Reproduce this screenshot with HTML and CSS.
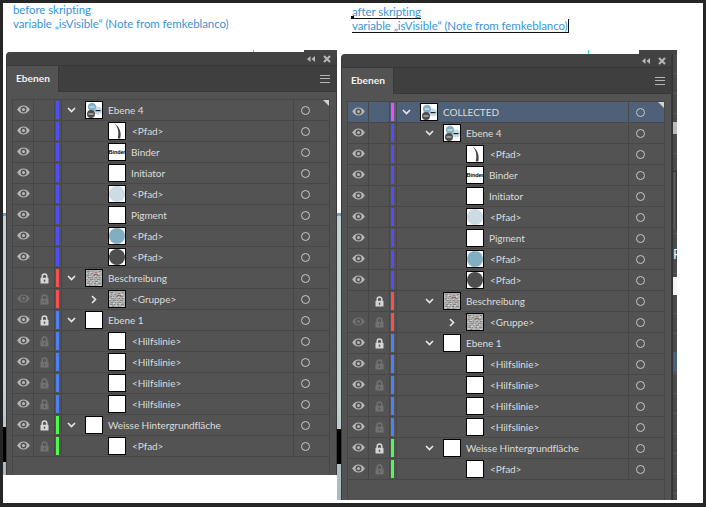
FILE: index.html
```html
<!DOCTYPE html>
<html lang="de">
<head>
<meta charset="utf-8">
<title>Ebenen before and after</title>
<link rel="stylesheet" href="styles.css">
</head>
<body>
<svg class="defs" width="0" height="0" aria-hidden="true">
  <symbol id="eye" viewBox="0 0 13 9"><path fill="currentColor" d="M.2 4.5C1.8 1.9 3.9.4 6.5.4s4.7 1.5 6.3 4.1C11.2 7.1 9.1 8.6 6.500 8.600S1.800 7.100.2 4.500z"/><circle cx="6.500" cy="4.500" r="3" fill="#535353"/><circle cx="6.500" cy="4.500" r="1.500" fill="currentColor"/></symbol>
  <symbol id="lock" viewBox="0 0 9 11"><path fill="none" stroke="currentColor" stroke-width="1.500" d="M2.200 5V3.200a2.300 2.300 0 0 1 4.600 0V5"/><rect x=".5" y="4.800" width="8" height="5.700" rx=".6" fill="currentColor"/><rect x="3.800" y="6.600" width="1.400" height="2.200" fill="#535353"/></symbol>
  <symbol id="down" viewBox="0 0 9 6"><path fill="none" stroke="currentColor" stroke-width="1.600" d="M1 1l3.500 3.500L8 1"/></symbol>
  <symbol id="right" viewBox="0 0 6 9"><path fill="none" stroke="currentColor" stroke-width="1.600" d="M1 1l3.500 3.500L1 8"/></symbol>
  <symbol id="art" viewBox="0 0 16 16"><circle cx="12" cy="8.500" r="4" fill="#c9dbe6"/><circle cx="6" cy="5" r="4.200" fill="#85b0c4"/><rect x="3.500" y="4.500" width="5" height="1" fill="#e8f0f4"/><circle cx="5" cy="12" r="4" fill="#4e4e4e"/><rect x="2.500" y="11.500" width="5" height="1" fill="#ddd"/><rect x="9.500" y="8" width="5" height="1.200" fill="#222"/></symbol>
  <symbol id="arc" viewBox="0 0 16 16"><path fill="#444" d="M5.500.5C9.300 4 10 9.500 8.800 15.500h2.400C12.800 9.500 10.500 3.500 5.500.5z"/></symbol>
  <symbol id="noise" viewBox="0 0 16 16"><rect width="16" height="16" fill="#b0b0b0"/><path fill="#868686" d="M1 1h3v1H1zM6 1h1v1H6zM9 2h2v1H9zM13 1h2v1h-2zM2 3h1v1H2zM5 3h2v1H5zM1 5h2v1H1zM4 5h1v1H4zM7 5h2v1H7zM11 5h3v1h-3zM2 7h3v1H2zM6 7h1v1H6zM9 7h2v1H9zM13 7h2v1h-2zM1 9h1v1H1zM4 9h3v1H4zM8 9h1v1H8zM11 9h3v1h-3zM2 11h2v1H2zM6 11h1v1H6zM9 11h3v1H9zM1 13h3v1H1zM5 13h1v1H5zM8 13h2v1H8zM12 13h3v1h-3zM3 15h2v1H3zM9 15h1v1H9z"/><path fill="#a8584c" d="M8 4h4v1H8z"/><path fill="#cfcfcf" d="M0 3h1v1H0zM4 2h2v1H4zM12 3h2v1h-2zM3 6h2v1H3zM9 6h1v1H9zM14 6h2v1h-2zM0 8h2v1H0zM6 10h2v1H6zM12 10h1v1h-1zM4 12h2v1H4zM10 12h2v1h-2zM1 14h2v1H1zM7 14h1v1H7zM13 15h2v1h-2z"/></symbol>
</svg>
<div class="screen">
  <main class="page">
    <i class="strip strip-left"></i>
    <i class="strip strip-mid"></i>
    <i class="scrap scrap-a"></i>
    <i class="scrap scrap-b"></i>
    <i class="tick tick-a"></i>
    <i class="tick tick-b"></i>
    <div class="edge">
      <i class="edge-light"></i>
      <i class="edge-box"></i>
      <span class="edge-f">F</span>
      <i class="edge-white"></i>
      <i class="edge-blue"></i>
    </div>

    <section class="col col-before">
      <p class="caption">before skripting<br>variable „isVisible“ (Note from femkeblanco)</p>
      <div class="panel">
        <div class="head"><svg class="collapse" viewBox="0 0 8 6"><path d="M3.500 0v6L0 3zM8 0v6L4.500 3z"/></svg><svg class="close" viewBox="0 0 8 8"><path d="M1 1l6 6M7 1L1 7"/></svg></div>
        <div class="tabs"><span class="tab">Ebenen</span><span class="menu"><i></i><i></i><i></i></span></div>
        <div class="list">
          <i class="corner"></i>
          <div class="row"><span class="c-eye"><svg class="eye"><use href="#eye"/></svg></span><span class="c-lock"></span><span class="c-tag"><i class="bar blue"></i></span><span class="name d0"><span class="chev"><svg class="down"><use href="#down"/></svg></span><span class="thumb"><svg><use href="#art"/></svg></span><span class="label">Ebene 4</span></span><span class="target"><i></i></span></div>
          <div class="row"><span class="c-eye"><svg class="eye"><use href="#eye"/></svg></span><span class="c-lock"></span><span class="c-tag"><i class="bar blue"></i></span><span class="name d1"><span class="chev"></span><span class="thumb"><svg><use href="#arc"/></svg></span><span class="label angled">&lt;Pfad&gt;</span></span><span class="target"><i></i></span></div>
          <div class="row"><span class="c-eye"><svg class="eye"><use href="#eye"/></svg></span><span class="c-lock"></span><span class="c-tag"><i class="bar blue"></i></span><span class="name d1"><span class="chev"></span><span class="thumb thumb-text">Binder</span><span class="label">Binder</span></span><span class="target"><i></i></span></div>
          <div class="row"><span class="c-eye"><svg class="eye"><use href="#eye"/></svg></span><span class="c-lock"></span><span class="c-tag"><i class="bar blue"></i></span><span class="name d1"><span class="chev"></span><span class="thumb"></span><span class="label">Initiator</span></span><span class="target"><i></i></span></div>
          <div class="row"><span class="c-eye"><svg class="eye"><use href="#eye"/></svg></span><span class="c-lock"></span><span class="c-tag"><i class="bar blue"></i></span><span class="name d1"><span class="chev"></span><span class="thumb"><i class="disc pale"></i></span><span class="label angled">&lt;Pfad&gt;</span></span><span class="target"><i></i></span></div>
          <div class="row"><span class="c-eye"><svg class="eye"><use href="#eye"/></svg></span><span class="c-lock"></span><span class="c-tag"><i class="bar blue"></i></span><span class="name d1"><span class="chev"></span><span class="thumb"></span><span class="label">Pigment</span></span><span class="target"><i></i></span></div>
          <div class="row"><span class="c-eye"><svg class="eye"><use href="#eye"/></svg></span><span class="c-lock"></span><span class="c-tag"><i class="bar blue"></i></span><span class="name d1"><span class="chev"></span><span class="thumb"><i class="disc teal"></i></span><span class="label angled">&lt;Pfad&gt;</span></span><span class="target"><i></i></span></div>
          <div class="row"><span class="c-eye"><svg class="eye"><use href="#eye"/></svg></span><span class="c-lock"></span><span class="c-tag"><i class="bar blue"></i></span><span class="name d1"><span class="chev"></span><span class="thumb"><i class="disc dark"></i></span><span class="label angled">&lt;Pfad&gt;</span></span><span class="target"><i></i></span></div>
          <div class="row"><span class="c-eye"></span><span class="c-lock"><svg class="lock"><use href="#lock"/></svg></span><span class="c-tag"><i class="bar red"></i></span><span class="name d0"><span class="chev"><svg class="down"><use href="#down"/></svg></span><span class="thumb"><svg><use href="#noise"/></svg></span><span class="label">Beschreibung</span></span><span class="target"><i></i></span></div>
          <div class="row"><span class="c-eye"><svg class="eye dim"><use href="#eye"/></svg></span><span class="c-lock"><svg class="lock dim"><use href="#lock"/></svg></span><span class="c-tag"><i class="bar red"></i></span><span class="name d1"><span class="chev"><svg class="side"><use href="#right"/></svg></span><span class="thumb"><svg><use href="#noise"/></svg></span><span class="label angled">&lt;Gruppe&gt;</span></span><span class="target"><i></i></span></div>
          <div class="row"><span class="c-eye"><svg class="eye"><use href="#eye"/></svg></span><span class="c-lock"><svg class="lock"><use href="#lock"/></svg></span><span class="c-tag"><i class="bar sky"></i></span><span class="name d0"><span class="chev"><svg class="down"><use href="#down"/></svg></span><span class="thumb"></span><span class="label">Ebene 1</span></span><span class="target"><i></i></span></div>
          <div class="row"><span class="c-eye"><svg class="eye"><use href="#eye"/></svg></span><span class="c-lock"><svg class="lock dim"><use href="#lock"/></svg></span><span class="c-tag"><i class="bar sky"></i></span><span class="name d1"><span class="chev"></span><span class="thumb"></span><span class="label angled">&lt;Hilfslinie&gt;</span></span><span class="target"><i></i></span></div>
          <div class="row"><span class="c-eye"><svg class="eye"><use href="#eye"/></svg></span><span class="c-lock"><svg class="lock dim"><use href="#lock"/></svg></span><span class="c-tag"><i class="bar sky"></i></span><span class="name d1"><span class="chev"></span><span class="thumb"></span><span class="label angled">&lt;Hilfslinie&gt;</span></span><span class="target"><i></i></span></div>
          <div class="row"><span class="c-eye"><svg class="eye"><use href="#eye"/></svg></span><span class="c-lock"><svg class="lock dim"><use href="#lock"/></svg></span><span class="c-tag"><i class="bar sky"></i></span><span class="name d1"><span class="chev"></span><span class="thumb"></span><span class="label angled">&lt;Hilfslinie&gt;</span></span><span class="target"><i></i></span></div>
          <div class="row"><span class="c-eye"><svg class="eye"><use href="#eye"/></svg></span><span class="c-lock"><svg class="lock dim"><use href="#lock"/></svg></span><span class="c-tag"><i class="bar sky"></i></span><span class="name d1"><span class="chev"></span><span class="thumb"></span><span class="label angled">&lt;Hilfslinie&gt;</span></span><span class="target"><i></i></span></div>
          <div class="row"><span class="c-eye"><svg class="eye"><use href="#eye"/></svg></span><span class="c-lock"><svg class="lock"><use href="#lock"/></svg></span><span class="c-tag"><i class="bar green"></i></span><span class="name d0"><span class="chev"><svg class="down"><use href="#down"/></svg></span><span class="thumb"></span><span class="label">Weisse Hintergrundfläche</span></span><span class="target"><i></i></span></div>
          <div class="row"><span class="c-eye"><svg class="eye"><use href="#eye"/></svg></span><span class="c-lock"><svg class="lock dim"><use href="#lock"/></svg></span><span class="c-tag"><i class="bar green"></i></span><span class="name d1"><span class="chev"></span><span class="thumb"></span><span class="label angled">&lt;Pfad&gt;</span></span><span class="target"><i></i></span></div>
        </div>
      </div>
    </section>

    <section class="col col-after">
      <p class="caption"><i class="handle"></i><span class="sel">after skripting</span><br><span class="sel caret">variable „isVisible“ (Note from femkeblanco)</span></p>
      <div class="panel">
        <div class="head"><svg class="collapse" viewBox="0 0 8 6"><path d="M3.500 0v6L0 3zM8 0v6L4.500 3z"/></svg><svg class="close" viewBox="0 0 8 8"><path d="M1 1l6 6M7 1L1 7"/></svg></div>
        <div class="tabs"><span class="tab">Ebenen</span><span class="menu"><i></i><i></i><i></i></span></div>
        <div class="list">
          <i class="corner"></i>
          <div class="row selected"><span class="c-eye"><svg class="eye"><use href="#eye"/></svg></span><span class="c-lock"></span><span class="c-tag"><i class="bar pink"></i></span><span class="name d0"><span class="chev"><svg class="down"><use href="#down"/></svg></span><span class="thumb"><svg><use href="#art"/></svg></span><span class="label">COLLECTED</span></span><span class="target"><i></i></span></div>
          <div class="row"><span class="c-eye"><svg class="eye"><use href="#eye"/></svg></span><span class="c-lock"></span><span class="c-tag"><i class="bar blue"></i></span><span class="name d1"><span class="chev"><svg class="down"><use href="#down"/></svg></span><span class="thumb"><svg><use href="#art"/></svg></span><span class="label">Ebene 4</span></span><span class="target"><i></i></span></div>
          <div class="row"><span class="c-eye"><svg class="eye"><use href="#eye"/></svg></span><span class="c-lock"></span><span class="c-tag"><i class="bar blue"></i></span><span class="name d2"><span class="chev"></span><span class="thumb"><svg><use href="#arc"/></svg></span><span class="label angled">&lt;Pfad&gt;</span></span><span class="target"><i></i></span></div>
          <div class="row"><span class="c-eye"><svg class="eye"><use href="#eye"/></svg></span><span class="c-lock"></span><span class="c-tag"><i class="bar blue"></i></span><span class="name d2"><span class="chev"></span><span class="thumb thumb-text">Binder</span><span class="label">Binder</span></span><span class="target"><i></i></span></div>
          <div class="row"><span class="c-eye"><svg class="eye"><use href="#eye"/></svg></span><span class="c-lock"></span><span class="c-tag"><i class="bar blue"></i></span><span class="name d2"><span class="chev"></span><span class="thumb"></span><span class="label">Initiator</span></span><span class="target"><i></i></span></div>
          <div class="row"><span class="c-eye"><svg class="eye"><use href="#eye"/></svg></span><span class="c-lock"></span><span class="c-tag"><i class="bar blue"></i></span><span class="name d2"><span class="chev"></span><span class="thumb"><i class="disc pale"></i></span><span class="label angled">&lt;Pfad&gt;</span></span><span class="target"><i></i></span></div>
          <div class="row"><span class="c-eye"><svg class="eye"><use href="#eye"/></svg></span><span class="c-lock"></span><span class="c-tag"><i class="bar blue"></i></span><span class="name d2"><span class="chev"></span><span class="thumb"></span><span class="label">Pigment</span></span><span class="target"><i></i></span></div>
          <div class="row"><span class="c-eye"><svg class="eye"><use href="#eye"/></svg></span><span class="c-lock"></span><span class="c-tag"><i class="bar blue"></i></span><span class="name d2"><span class="chev"></span><span class="thumb"><i class="disc teal"></i></span><span class="label angled">&lt;Pfad&gt;</span></span><span class="target"><i></i></span></div>
          <div class="row"><span class="c-eye"><svg class="eye"><use href="#eye"/></svg></span><span class="c-lock"></span><span class="c-tag"><i class="bar blue"></i></span><span class="name d2"><span class="chev"></span><span class="thumb"><i class="disc dark"></i></span><span class="label angled">&lt;Pfad&gt;</span></span><span class="target"><i></i></span></div>
          <div class="row"><span class="c-eye"></span><span class="c-lock"><svg class="lock"><use href="#lock"/></svg></span><span class="c-tag"><i class="bar red"></i></span><span class="name d1"><span class="chev"><svg class="down"><use href="#down"/></svg></span><span class="thumb"><svg><use href="#noise"/></svg></span><span class="label">Beschreibung</span></span><span class="target"><i></i></span></div>
          <div class="row"><span class="c-eye"><svg class="eye dim"><use href="#eye"/></svg></span><span class="c-lock"><svg class="lock dim"><use href="#lock"/></svg></span><span class="c-tag"><i class="bar red"></i></span><span class="name d2"><span class="chev"><svg class="side"><use href="#right"/></svg></span><span class="thumb"><svg><use href="#noise"/></svg></span><span class="label angled">&lt;Gruppe&gt;</span></span><span class="target"><i></i></span></div>
          <div class="row"><span class="c-eye"><svg class="eye"><use href="#eye"/></svg></span><span class="c-lock"><svg class="lock"><use href="#lock"/></svg></span><span class="c-tag"><i class="bar sky"></i></span><span class="name d1"><span class="chev"><svg class="down"><use href="#down"/></svg></span><span class="thumb"></span><span class="label">Ebene 1</span></span><span class="target"><i></i></span></div>
          <div class="row"><span class="c-eye"><svg class="eye"><use href="#eye"/></svg></span><span class="c-lock"><svg class="lock dim"><use href="#lock"/></svg></span><span class="c-tag"><i class="bar sky"></i></span><span class="name d2"><span class="chev"></span><span class="thumb"></span><span class="label angled">&lt;Hilfslinie&gt;</span></span><span class="target"><i></i></span></div>
          <div class="row"><span class="c-eye"><svg class="eye"><use href="#eye"/></svg></span><span class="c-lock"><svg class="lock dim"><use href="#lock"/></svg></span><span class="c-tag"><i class="bar sky"></i></span><span class="name d2"><span class="chev"></span><span class="thumb"></span><span class="label angled">&lt;Hilfslinie&gt;</span></span><span class="target"><i></i></span></div>
          <div class="row"><span class="c-eye"><svg class="eye"><use href="#eye"/></svg></span><span class="c-lock"><svg class="lock dim"><use href="#lock"/></svg></span><span class="c-tag"><i class="bar sky"></i></span><span class="name d2"><span class="chev"></span><span class="thumb"></span><span class="label angled">&lt;Hilfslinie&gt;</span></span><span class="target"><i></i></span></div>
          <div class="row"><span class="c-eye"><svg class="eye"><use href="#eye"/></svg></span><span class="c-lock"><svg class="lock dim"><use href="#lock"/></svg></span><span class="c-tag"><i class="bar sky"></i></span><span class="name d2"><span class="chev"></span><span class="thumb"></span><span class="label angled">&lt;Hilfslinie&gt;</span></span><span class="target"><i></i></span></div>
          <div class="row"><span class="c-eye"><svg class="eye"><use href="#eye"/></svg></span><span class="c-lock"><svg class="lock"><use href="#lock"/></svg></span><span class="c-tag"><i class="bar green"></i></span><span class="name d1"><span class="chev"><svg class="down"><use href="#down"/></svg></span><span class="thumb"></span><span class="label">Weisse Hintergrundfläche</span></span><span class="target"><i></i></span></div>
          <div class="row"><span class="c-eye"><svg class="eye"><use href="#eye"/></svg></span><span class="c-lock"><svg class="lock dim"><use href="#lock"/></svg></span><span class="c-tag"><i class="bar green"></i></span><span class="name d2"><span class="chev"></span><span class="thumb"></span><span class="label angled">&lt;Pfad&gt;</span></span><span class="target"><i></i></span></div>
        </div>
      </div>
    </section>
  </main>
</div>
</body>
</html>
```
FILE: styles.css
```css
* { box-sizing: border-box; }
html, body { margin: 0; padding: 0; }
body { width: 706px; height: 507px; overflow: hidden; background: #262626; font-family: "Lato", "Liberation Sans", sans-serif; }
.defs { position: absolute; }
.screen { width: 706px; height: 507px; padding: 3px; }
.page { position: relative; width: 700px; height: 500px; background: #fff; display: flex; align-items: stretch; }

/* things peeking out from behind the panels */
.strip { position: absolute; top: 210px; background: linear-gradient(#6fa3b8 0 3px, #c3d1d8 3px 65%, #a9b8c1); }
.strip::after { content: ""; position: absolute; left: 0; right: 0; height: 35px; background: #000; }
.strip-left { left: 0; width: 3px; height: 262px; }
.strip-left::after { top: 214px; }
.strip-mid { left: 334px; width: 5px; height: 287px; }
.strip-mid::after { top: 216px; }
.scrap { position: absolute; background: #444; }
.scrap-a { left: 301px; top: 47px; width: 33px; height: 4px; }
.scrap-b { left: 636px; top: 47px; width: 38px; height: 8px; }
.tick { position: absolute; top: 47px; width: 1px; height: 5px; background: #2fd3dc; }
.tick-a { left: 250px; }
.tick-b { left: 585px; }
.edge { position: absolute; left: 669px; top: 51px; width: 5px; height: 446px; overflow: hidden; border-left: 1px solid #333; background: repeating-linear-gradient(#4a4a4a 0 19px, #5c5c5c 19px 20px); }
.edge i { position: absolute; left: 0; right: 0; display: block; }
.edge-light { top: 68px; height: 12px; background: #b9b9b9; }
.edge-box { top: 117px; height: 59px; background: #555; border-top: 1px solid #333; border-right: 1px solid #333; }
.edge-f { position: absolute; top: 192px; left: 0; font-size: 13px; line-height: 16px; color: #f2f2f2; }
.edge-white { top: 223px; height: 18px; background: #f4f4f4; }
.edge-blue { top: 298px; height: 20px; background: #4a6078; }

/* columns */
.col { position: relative; display: flex; flex-direction: column; width: 331px; }
.col-before { margin-left: 3px; padding-bottom: 28px; }
.col-after { margin-left: 4px; padding-bottom: 3px; }
.caption { margin: 0; padding-left: 7px; font-size: 11.500px; letter-spacing: -.08px; line-height: 14px; color: #3a94d6; white-space: nowrap; }
.col-before .caption { height: 49px; }
.col-after .caption { height: 51px; padding: 2px 0 0 11px; position: relative; }
.sel { display: inline-block; height: 14px; border-bottom: 1px solid #111; }
.caret { border-right: 1px solid #111; }
.handle { position: absolute; left: 10px; top: 13px; width: 3px; height: 3px; background: #111; }

/* panel */
.panel { flex: 1; display: flex; flex-direction: column; min-height: 0; background: #535353; border-left: 1px solid #3a3a3a; border-right: 1px solid #3a3a3a; border-radius: 4px 4px 0 0; }
.head { height: 13px; flex: none; display: flex; justify-content: flex-end; align-items: center; gap: 8px; padding: 0 5px 0 0; background: #424242; border-radius: 4px 4px 0 0; }
.collapse { width: 8px; height: 6px; fill: #b8b8b8; }
.close { width: 8px; height: 8px; fill: none; stroke: #b8b8b8; stroke-width: 2; }
.tabs { height: 27px; flex: none; display: flex; justify-content: space-between; background: #3f3f3f; border-top: 1px solid #383838; border-bottom: 1px solid #383838; }
.tab { width: 52px; margin-bottom: -1px; padding-left: 9px; background: #535353; border-right: 1px solid #383838; font-size: 10.200px; font-weight: 700; line-height: 24px; color: #f0f0f0; }
.menu { display: flex; flex-direction: column; justify-content: center; gap: 2.500px; width: 10px; margin-right: 6px; }
.menu i { display: block; height: 1px; background: #b4b4b4; }

/* layer list */
.list { position: relative; flex: 1; margin: 7px 6px 0 5px; border: 1px solid #474747; border-bottom: 0; }
.corner { position: absolute; top: 0; right: 0; width: 6px; height: 6px; background: #d2d2d2; clip-path: polygon(0 0, 100% 0, 100% 100%); z-index: 1; }
.row { display: grid; grid-template-columns: 21px 21px 7px 1fr 36px; height: 21px; border-bottom: 1px solid #474747; }
.row.selected { background: #4f6178; }
.row > span { display: flex; align-items: center; border-right: 1px solid #474747; min-width: 0; }
.c-eye, .c-lock { justify-content: center; }
.row > .target { border-right: 0; border-left: 1px solid #474747; padding-left: 7px; }
.target i { display: block; width: 9px; height: 9px; border: 1px solid #c8c8c8; border-radius: 50%; }
.eye { width: 13px; height: 9px; margin-top: -2px; color: #b8b8b8; }
.lock { width: 9px; height: 11px; color: #d6d6d6; }
.dim { color: #727272; }
.selected .eye circle { fill: #4f6178; }
.bar { display: block; width: 3px; height: 18px; margin-left: 1px; }
.blue { background: #4f4ff5; }
.red { background: #f94f4f; }
.sky { background: #4f7ff5; }
.green { background: #4ffa4f; }
.pink { background: #ef4fef; }
.row > .name { border-right: 0; }
.row > .d0 { padding-left: 0; }
.row > .d1 { padding-left: 23px; }
.row > .d2 { padding-left: 46px; }
.chev { flex: none; width: 23px; display: flex; justify-content: center; color: #e8e8e8; padding-right: 5px; }
.down { width: 9px; height: 6px; }
.side { width: 6px; height: 9px; }
.thumb { flex: none; width: 18px; height: 18px; margin-top: -1px; background: #fff; border: 1px solid #000; display: flex; align-items: center; justify-content: center; overflow: hidden; }
.thumb svg { width: 16px; height: 16px; display: block; }
.thumb-text { font-family: "Liberation Sans", sans-serif; font-size: 5.500px; font-weight: 700; color: #000; letter-spacing: -.1px; }
.disc { display: block; width: 16px; height: 16px; border-radius: 50%; }
.pale { background: #cddbe4; }
.teal { background: #82aec2; }
.dark { background: #4e4e4e; }
.label { margin-left: 5px; font-size: 10px; letter-spacing: -.05px; color: #dcdcdc; white-space: nowrap; }
.angled { margin-left: 6px; }
```
